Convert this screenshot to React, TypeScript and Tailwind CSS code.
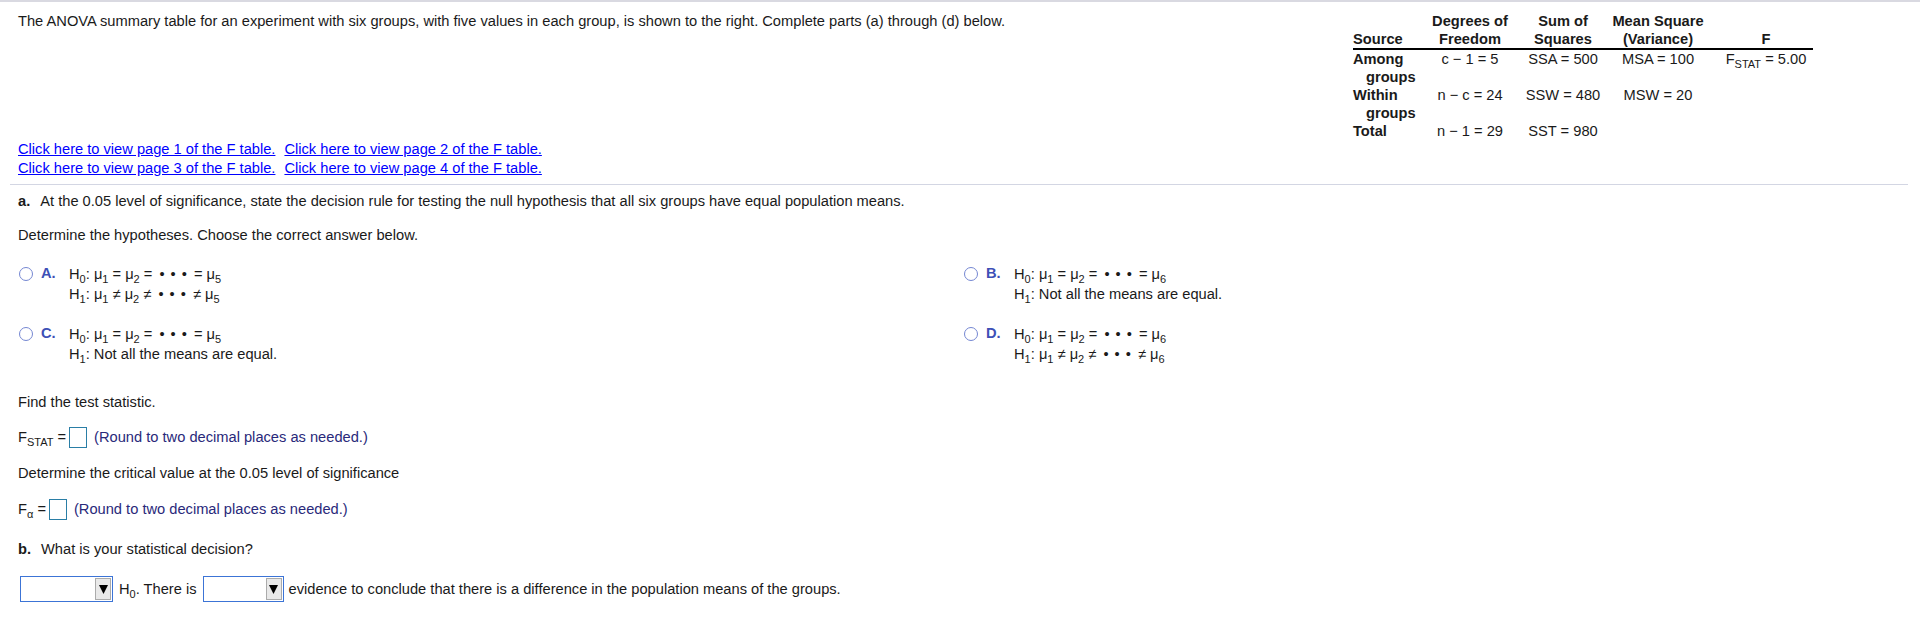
import type { ReactNode } from 'react';

function Sub({ children }: { children: ReactNode }) {
  return <sub className="bottom-[-4px] text-[11px]">{children}</sub>;
}

function Radio() {
  return <span className="mt-[3px] block h-[14px] w-[14px] shrink-0 rounded-full border-[1.5px] border-[#7587d2] bg-white" />;
}

function AnswerBox() {
  return <span className="inline-block h-[21px] w-[18px] border border-[#2a7ea6] bg-white" />;
}

function Dropdown({ width }: { width: string }) {
  return (
    <span className={`flex h-[26px] items-center justify-end border border-[#3c74d6] bg-white pr-[1px] ${width}`}>
      <span className="flex h-[22px] w-[16px] items-center justify-center border border-[#ababab] bg-[#e9e9e9]">
        <svg width="9" height="10" viewBox="0 0 9 10">
          <path d="M0 1h9L4.5 10z" fill="#000" />
        </svg>
      </span>
    </span>
  );
}

interface OptionProps {
  letter: string;
  h0: ReactNode;
  h1: ReactNode;
}

function Option({ letter, h0, h1 }: OptionProps) {
  return (
    <div className="flex pl-[1px]">
      <Radio />
      <span className="ml-[8px] w-[28px] shrink-0 font-bold text-[#3d50b6]">{letter}</span>
      <div className="leading-[20px]">
        <div>{h0}</div>
        <div>{h1}</div>
      </div>
    </div>
  );
}

const mu = (n: number) => (
  <>
    μ<Sub>{n}</Sub>
  </>
);

// the three dots between the terms are set wide apart in the reference
const dots = (
  <span className="mx-[3px] inline-flex gap-x-[6px]">
    <span>•</span>
    <span>•</span>
    <span>•</span>
  </span>
);

const equalMeans = (k: number) => (
  <>
    H<Sub>0</Sub>: {mu(1)} = {mu(2)} = {dots} = {mu(k)}
  </>
);

const unequalMeans = (k: number) => (
  <>
    H<Sub>1</Sub>: {mu(1)} ≠ {mu(2)} ≠ {dots} ≠ {mu(k)}
  </>
);

const notAllEqual = (
  <>
    H<Sub>1</Sub>: Not all the means are equal.
  </>
);

function AnovaTable() {
  return (
    <div className="mr-[107px] grid grid-cols-[67px_100px_86px_104px_103px] leading-[18px]">
      <div className="self-end font-bold">Source</div>
      <div className="self-end text-center font-bold">
        Degrees of
        <br />
        Freedom
      </div>
      <div className="self-end text-center font-bold">
        Sum of
        <br />
        Squares
      </div>
      <div className="self-end text-center font-bold">
        Mean Square
        <br />
        (Variance)
      </div>
      <div className="self-end pl-[9px] text-center font-bold">F</div>

      <div className="col-span-5 h-[1.5px] bg-black" />

      <div className="pl-[13px] -indent-[13px] font-bold">Among groups</div>
      <div className="text-center">c − 1 = 5</div>
      <div className="text-center">SSA = 500</div>
      <div className="text-center">MSA = 100</div>
      <div className="pl-[9px] text-center">
        F<Sub>STAT</Sub> = 5.00
      </div>

      <div className="pl-[13px] -indent-[13px] font-bold">Within groups</div>
      <div className="text-center">n − c = 24</div>
      <div className="text-center">SSW = 480</div>
      <div className="text-center">MSW = 20</div>
      <div />

      <div className="font-bold">Total</div>
      <div className="text-center">n − 1 = 29</div>
      <div className="text-center">SST = 980</div>
      <div />
      <div />
    </div>
  );
}

export default function App() {
  const link = 'text-[#0000ff] underline';

  return (
    <div className="min-h-[643px] w-full border-t-2 border-[#d9d9e1] bg-white font-['Liberation_Sans',Arial,sans-serif] text-[14.67px] leading-[18px] text-[#1a1a1a]">
      <div className="flex pt-[10px]">
        <div className="flex-1 pl-[18px]">
          The ANOVA summary table for an experiment with six groups, with five values in each group, is shown to the
          right. Complete parts (a) through (d) below.
        </div>
        <AnovaTable />
      </div>

      <div className="pl-[18px] leading-[19px]">
        <div className="flex gap-x-[9px]">
          <span className={link}>Click here to view page 1 of the F table.</span>
          <span className={link}>Click here to view page 2 of the F table.</span>
        </div>
        <div className="flex gap-x-[9px]">
          <span className={link}>Click here to view page 3 of the F table.</span>
          <span className={link}>Click here to view page 4 of the F table.</span>
        </div>
      </div>

      <div className="ml-[10px] mr-[12px] mt-[6px] border-t border-[#d3d6e3]" />

      <div className="pl-[18px]">
        <p className="mt-[7px]">
          <span className="mr-[10px] font-bold">a.</span>
          At the 0.05 level of significance, state the decision rule for testing the null hypothesis that all six groups
          have equal population means.
        </p>

        <p className="mt-[16px]">Determine the hypotheses. Choose the correct answer below.</p>

        <div className="mt-[20px] grid grid-cols-[945px_1fr] gap-y-[20px]">
          <Option letter="A." h0={equalMeans(5)} h1={unequalMeans(5)} />
          <Option letter="B." h0={equalMeans(6)} h1={notAllEqual} />
          <Option letter="C." h0={equalMeans(5)} h1={notAllEqual} />
          <Option letter="D." h0={equalMeans(6)} h1={unequalMeans(6)} />
        </div>

        <p className="mt-[29px]">Find the test statistic.</p>

        <div className="mt-[16px] flex h-[21px] items-center">
          <span>
            F<Sub>STAT</Sub> =
          </span>
          <span className="ml-[3px] flex">
            <AnswerBox />
          </span>
          <span className="ml-[7px] text-[#29297a]">(Round to two decimal places as needed.)</span>
        </div>

        <p className="mt-[16px]">Determine the critical value at the 0.05 level of significance</p>

        <div className="mt-[17px] flex h-[21px] items-center">
          <span>
            F<Sub>α</Sub> =
          </span>
          <span className="ml-[3px] flex">
            <AnswerBox />
          </span>
          <span className="ml-[7px] text-[#29297a]">(Round to two decimal places as needed.)</span>
        </div>

        <p className="mt-[20px]">
          <span className="mr-[10px] font-bold">b.</span>
          What is your statistical decision?
        </p>

        <div className="mt-[18px] flex items-center pl-[2px]">
          <Dropdown width="w-[93px]" />
          <span className="ml-[6px]">
            H<Sub>0</Sub>. There is
          </span>
          <span className="ml-[6px]">
            <Dropdown width="w-[81px]" />
          </span>
          <span className="ml-[5px]">
            evidence to conclude that there is a difference in the population means of the groups.
          </span>
        </div>
      </div>
    </div>
  );
}
